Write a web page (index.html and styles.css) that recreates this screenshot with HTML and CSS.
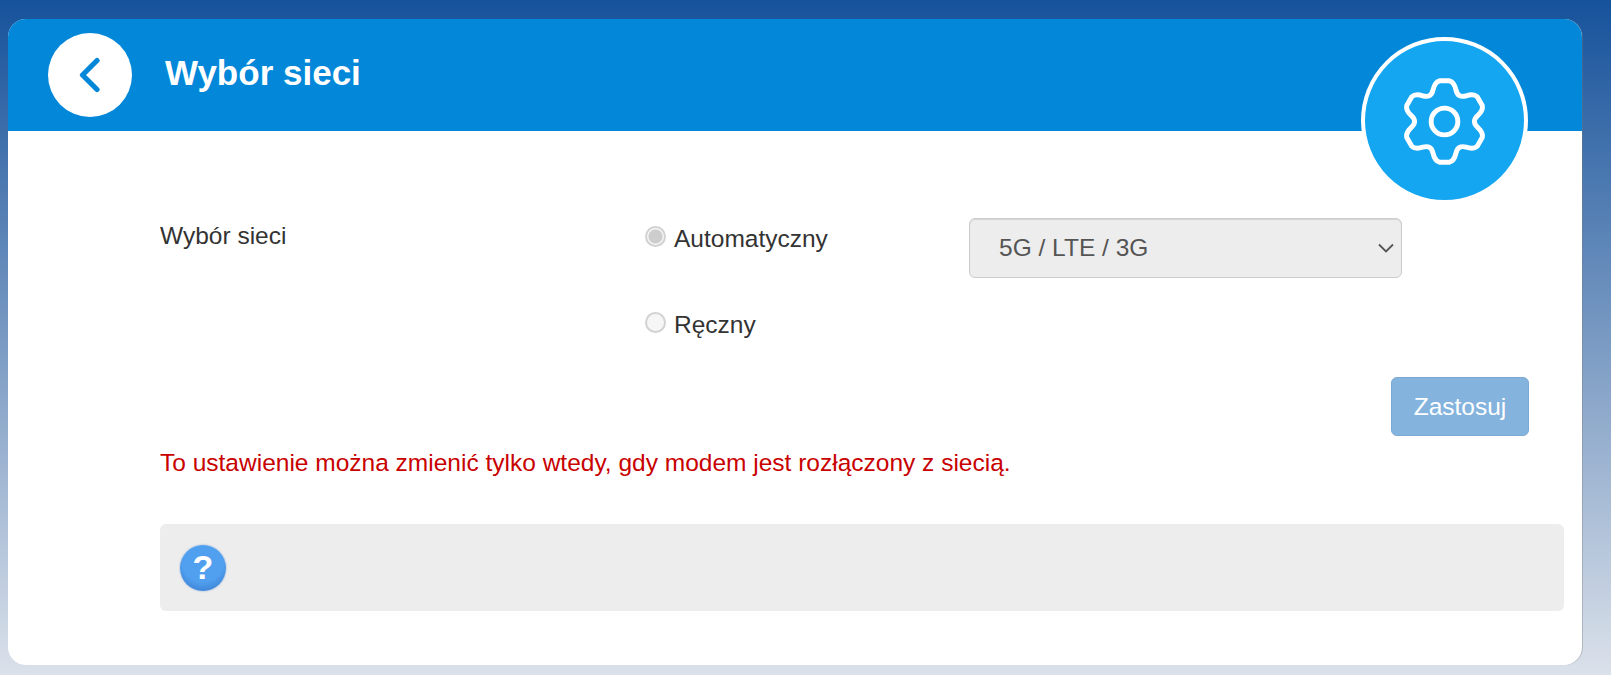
FILE: index.html
```html
<!DOCTYPE html>
<html lang="pl">
<head>
  <meta charset="UTF-8" />
  <meta name="viewport" content="width=device-width, initial-scale=1.0" />
  <title>Wybór sieci</title>
  <link rel="stylesheet" href="styles.css">
</head>
<body>
  <div class="card">
    <div class="card-header">
      <a class="back-btn" href="#">
        <svg viewBox="0 0 24 36" width="24" height="36">
          <path fill="none" stroke="currentColor" stroke-width="5.200" stroke-linecap="round" stroke-linejoin="round" d="M19 3.500 4.500 18 19 32.500"></path>
        </svg>
      </a>
      <h1>Wybór sieci</h1>
      <div class="gear-badge">
        <svg viewBox="-45 -45 90 90" width="89" height="89">
          <path fill="none" stroke="currentColor" stroke-width="5" stroke-linejoin="round" d="M-11.600 -32Q-9.900 -39.800 -5.100 -41.200L5.100 -41.200Q9.900 -39.800 11.600 -32Q13.500 -23.400 21.900 -26Q29.500 -28.500 33.100 -25L38.200 -16.200Q39.400 -11.300 33.500 -5.900Q27 0 33.500 5.900Q39.400 11.300 38.200 16.200L33.100 25Q29.500 28.500 21.900 26Q13.500 23.400 11.600 32Q9.900 39.800 5.100 41.200L-5.100 41.200Q-9.900 39.800 -11.600 32Q-13.500 23.400 -21.900 26Q-29.500 28.500 -33.100 25L-38.200 16.200Q-39.400 11.300 -33.500 5.900Q-27 0 -33.500 -5.900Q-39.400 -11.300 -38.200 -16.200L-33.100 -25Q-29.500 -28.500 -21.900 -26Q-13.500 -23.400 -11.600 -32Z"></path>
          <circle r="13.500" fill="none" stroke="currentColor" stroke-width="5"></circle>
        </svg>
      </div>
    </div>

    <form class="card-body">
      <div class="network-row">
        <div class="field-label">Wybór sieci</div>
        <div class="radio-list">
          <label class="radio-item"><input type="radio" name="mode" checked disabled> Automatyczny</label>
          <label class="radio-item"><input type="radio" name="mode" disabled> Ręczny</label>
        </div>
        <div class="select-wrap">
          <select disabled>
            <option>5G / LTE / 3G</option>
          </select>
          <svg viewBox="0 0 16 10" width="16" height="10">
            <path fill="none" stroke="currentColor" stroke-width="1.800" d="M1 1.500 8 8.500 15 1.500"></path>
          </svg>
        </div>
      </div>
      <div class="form-actions">
        <button type="submit" disabled>Zastosuj</button>
      </div>
      <p class="warning">To ustawienie można zmienić tylko wtedy, gdy modem jest rozłączony z siecią.</p>
      <div class="help-box">
        <span class="help-icon">?</span>
      </div>
    </form>
  </div>
</body>
</html>
```

FILE: styles.css
```css
html, body {
  height: 100%;
}
body {
  box-sizing: border-box;
  margin: 0;
  padding: 19px 29px 10px 8px;
  font-family: "Liberation Sans", Arial, sans-serif;
  color: #333;
  background: linear-gradient(#16529b, #dbe1ea);
  overflow: hidden;
}
.card {
  height: 100%;
  background-color: #fff;
  border-radius: 18px;
  box-shadow: 1px 0 0 rgba(120, 120, 120, 0.35);
  overflow: hidden;
}
.card-header {
  position: relative;
  display: flex;
  align-items: center;
  gap: 33px;
  height: 112px;
  padding-left: 40px;
  background-color: #0287d9;
}
.card-header h1 {
  margin: 0 0 4px;
  font-size: 35px;
  font-weight: bold;
  color: #fff;
}
.back-btn {
  display: flex;
  justify-content: center;
  align-items: center;
  width: 84px;
  height: 84px;
  border-radius: 50%;
  background-color: #fff;
  color: #0287d9;
}
.gear-badge {
  position: absolute;
  top: 18px;
  left: 1353px;
  z-index: 1;
  display: flex;
  justify-content: center;
  align-items: center;
  box-sizing: border-box;
  width: 167px;
  height: 167px;
  padding-top: 2px;
  border: 4px solid #fff;
  border-radius: 50%;
  background-color: #14a6f1;
  color: #fff;
}
.card-body {
  padding: 87px 18px 0 152px;
}
.network-row {
  display: grid;
  grid-template-columns: 485px 324px 433px;
}
.field-label {
  padding-top: 1px;
  font-size: 24.500px;
  line-height: 34px;
}
.radio-list {
  display: flex;
  flex-direction: column;
  gap: 52px;
  padding-top: 4px;
}
.radio-item {
  display: flex;
  align-items: center;
  gap: 8px;
  height: 34px;
  font-size: 24.500px;
}
.radio-item input {
  appearance: none;
  box-sizing: border-box;
  width: 21px;
  height: 21px;
  margin: 0 0 6px;
  border: 2px solid #d2d2d2;
  border-radius: 50%;
  background-color: #f6f6f6;
}
.radio-item input:checked {
  background: radial-gradient(circle, #cdcdcd 0 6.500px, #f6f6f6 7.500px);
}
.select-wrap {
  position: relative;
  color: #555;
}
.select-wrap select {
  appearance: none;
  display: block;
  box-sizing: border-box;
  width: 100%;
  height: 60px;
  padding: 0 0 2px 29px;
  border: 1px solid #ccc;
  border-radius: 6px;
  background-color: #ededed;
  box-shadow: inset 0 1px 1px rgba(0, 0, 0, 0.1);
  font-family: inherit;
  font-size: 24.500px;
  color: #555;
  opacity: 1;
}
.select-wrap svg {
  position: absolute;
  top: 25px;
  right: 8px;
}
.form-actions {
  display: flex;
  justify-content: flex-end;
  margin-top: 35px;
  padding-right: 35px;
}
.form-actions button {
  width: 138px;
  height: 59px;
  border: 1px solid #7ba9d3;
  border-radius: 6px;
  background-color: #84b3dd;
  font-family: inherit;
  font-size: 24.500px;
  color: #fff;
}
.warning {
  margin: 10px 0 0;
  font-size: 24.500px;
  line-height: 34px;
  color: #c80000;
}
.help-box {
  display: flex;
  align-items: center;
  height: 87px;
  margin-top: 44px;
  padding-left: 20px;
  border-radius: 6px;
  background-color: #ededed;
}
.help-icon {
  display: flex;
  justify-content: center;
  align-items: center;
  width: 46px;
  height: 46px;
  border-radius: 50%;
  background: radial-gradient(circle at 50% 35%, #519fef 0 55%, #3f86d8 80%, #2f6fb8 100%);
  box-shadow: 0 0 2px rgba(60, 120, 190, 0.6);
  font-size: 34px;
  font-weight: bold;
  color: #fff;
}
```
